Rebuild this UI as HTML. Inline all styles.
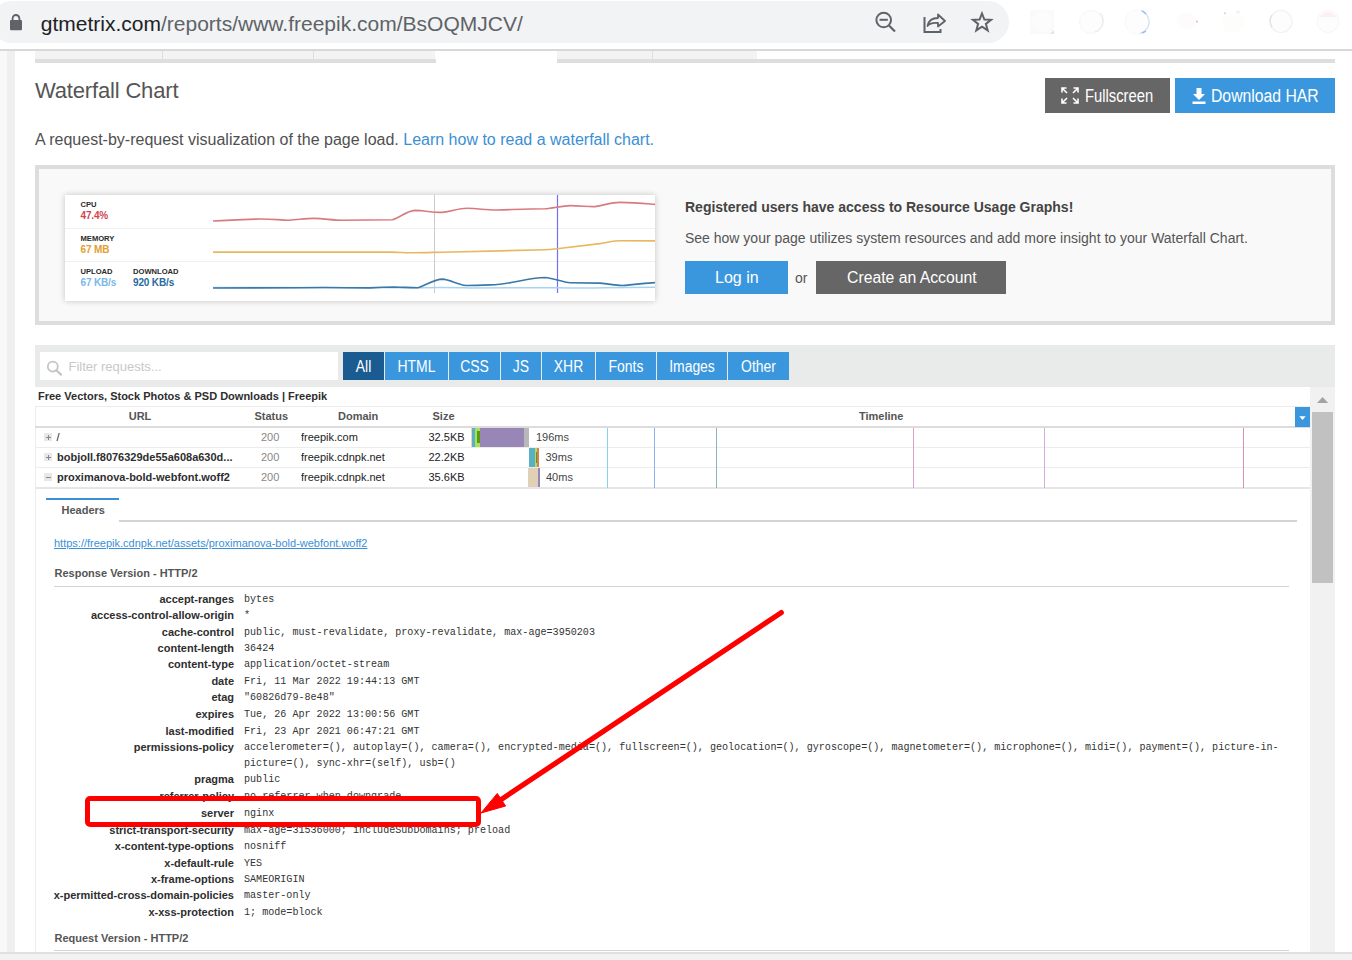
<!DOCTYPE html>
<html><head><meta charset="utf-8">
<style>
*{box-sizing:border-box;margin:0;padding:0}
html,body{width:1352px;height:960px;overflow:hidden;background:#fff;font-family:"Liberation Sans",sans-serif;position:relative}
.a{position:absolute}
.t{position:absolute;white-space:nowrap;line-height:1}
.mono{font-family:"Liberation Mono",monospace;font-size:11px;color:#333;transform:scaleX(0.9166);transform-origin:0 0}
</style></head><body>

<!-- browser toolbar -->
<div class="a" style="left:0;top:0;width:1352px;height:49px;background:#fff"></div>
<div class="a" style="left:-9px;top:1px;width:1018px;height:42px;background:#f1f3f4;border-radius:21px"></div>
<!-- lock -->
<svg class="a" style="left:0;top:0" width="30" height="40" viewBox="0 0 30 40">
  <path d="M12.6 20.5 V18.4 A3.4 3.4 0 0 1 19.4 18.4 V20.5" fill="none" stroke="#5f6368" stroke-width="1.8"/>
  <rect x="10" y="20" width="12" height="10.2" rx="1" fill="#5f6368"/>
</svg>
<div class="t" id="url" style="left:40.8px;top:12.7px;font-size:21px;color:#202124;letter-spacing:0px">gtmetrix.com<span style="color:#5f6368">/reports/www.freepik.com/BsOQMJCV/</span></div>
<!-- zoom -->
<svg class="a" style="left:872px;top:9px" width="26" height="26" viewBox="0 0 26 26">
  <circle cx="11.7" cy="11" r="7.3" fill="none" stroke="#5f6368" stroke-width="2"/>
  <line x1="7.5" y1="10.8" x2="15.8" y2="10.8" stroke="#5f6368" stroke-width="2"/>
  <line x1="17" y1="16.5" x2="23" y2="22.5" stroke="#5f6368" stroke-width="2.2"/>
</svg>
<!-- share -->
<svg class="a" style="left:920px;top:9px" width="26" height="26" viewBox="0 0 26 26">
  <path d="M4.5 8 V23 H20.5 V20" fill="none" stroke="#5f6368" stroke-width="2"/>
  <path d="M7.5 17 C8.5 11 13 9 18 9 V5.5 L25 12 L18 17.5 V14 C13 13.5 9.5 14.5 7.5 17 Z" fill="none" stroke="#5f6368" stroke-width="1.8" stroke-linejoin="round"/>
</svg>
<!-- star -->
<svg class="a" style="left:969px;top:9px" width="26" height="26" viewBox="0 0 26 26">
  <path d="M13 4.5 L15.4 10.5 L22 10.8 L16.9 14.9 L18.7 21.4 L13 17.7 L7.3 21.4 L9.1 14.9 L4 10.8 L10.6 10.5 Z" fill="none" stroke="#5f6368" stroke-width="2" stroke-linejoin="miter"/>
</svg>
<!-- extensions -->
<svg class="a" style="left:1010px;top:0;opacity:.55" width="342" height="46" viewBox="1010 0 342 46">
 <rect x="1030" y="10" width="24" height="24" fill="#f6f6f6"/>
 <circle cx="1042" cy="22" r="10" fill="#fbfbfb"/>
 <path d="M1050 34 L1054 30 L1054 34 Z" fill="#cfcfcf"/>
 <circle cx="1091" cy="22" r="11.5" fill="#fcfcfc" stroke="#f0f0f0" stroke-width="1"/>
 <path d="M1100 13 A11.5 11.5 0 0 1 1095 32" fill="none" stroke="#d0d0d0" stroke-width="1"/>
 <circle cx="1137" cy="22" r="12" fill="#fcfcfc" stroke="#eef3fb" stroke-width="1"/>
 <path d="M1141 10.5 A12 12 0 0 1 1140 33.5" fill="none" stroke="#a9c8f3" stroke-width="1.2"/>
 <path d="M1146 14 A12 12 0 0 0 1142 10.8" fill="none" stroke="#3f86e8" stroke-width="1.4"/>
 <path d="M1142 33 A12 12 0 0 0 1146 31" fill="none" stroke="#3f86e8" stroke-width="1.4"/>
 <ellipse cx="1187" cy="21" rx="10" ry="8" fill="#fdf8f8"/>
 <circle cx="1197" cy="21.5" r="1" fill="#f07070"/>
 <ellipse cx="1233" cy="23" rx="11" ry="10" fill="#fdfdfb"/>
 <circle cx="1225" cy="13.3" r="1" fill="#8cd070"/>
 <path d="M1235 12 L1240 10 L1239 14 Z" fill="#d8f0d0"/>
 <circle cx="1281" cy="21.5" r="11" fill="#fdfdfd" stroke="#e8e8ea" stroke-width="1.2"/>
 <path d="M1272 15 A11 11 0 0 0 1272 27" fill="none" stroke="#b8bcc4" stroke-width="1"/>
 <circle cx="1328" cy="21.5" r="11" fill="#fdfdfd" stroke="#f0f0f0" stroke-width="1"/>
 <path d="M1319 17 A11 11 0 0 1 1337 17 Z" fill="#fbe6e4"/>
</svg>
<div class="a" style="left:0;top:49px;width:1352px;height:2px;background:#d7d8da"></div>

<!-- page left strip -->
<div class="a" style="left:0;top:51px;width:7px;height:901px;background:#f8f8f8"></div>
<div class="a" style="left:7px;top:51px;width:8px;height:901px;background:#efefef"></div>

<!-- tab bar -->
<div class="a" style="left:35px;top:51px;width:400px;height:8px;background:#f3f3f3"></div>
<div class="a" style="left:162px;top:51px;width:1px;height:8px;background:#dedede"></div>
<div class="a" style="left:313px;top:51px;width:1px;height:8px;background:#dedede"></div>
<div class="a" style="left:557px;top:51px;width:200px;height:8px;background:#f3f3f3"></div>
<div class="a" style="left:652px;top:51px;width:1px;height:8px;background:#dedede"></div>
<div class="a" style="left:35px;top:59px;width:401px;height:4px;background:#dedede"></div>
<div class="a" style="left:557px;top:59px;width:778px;height:4px;background:#dedede"></div>

<!-- heading -->
<div class="t" style="left:35px;top:80px;font-size:22px;color:#555;letter-spacing:-0.17px">Waterfall Chart</div>
<div class="a" style="left:1045px;top:78px;width:125px;height:35px;background:#666"></div>
<svg class="a" style="left:1061px;top:87px" width="18" height="17" viewBox="0 0 18 17">
 <g fill="none" stroke="#fff" stroke-width="1.6">
  <path d="M1 5.5 V1 H5.5 M1 1 L6 6"/><path d="M17 5.5 V1 H12.5 M17 1 L12 6"/>
  <path d="M1 11.5 V16 H5.5 M1 16 L6 11"/><path d="M17 11.5 V16 H12.5 M17 16 L12 11"/>
 </g></svg>
<div class="t" style="left:1085px;top:87px;font-size:18px;color:#fff;transform:scaleX(0.82);transform-origin:0 0">Fullscreen</div>
<div class="a" style="left:1175px;top:78px;width:160px;height:35px;background:#3b97dd"></div>
<svg class="a" style="left:1192px;top:88px" width="14" height="16" viewBox="0 0 14 16">
 <path d="M4.5 0 H9.5 V6 H13 L7 12 L1 6 H4.5 Z" fill="#fff"/><rect x="0.5" y="13.5" width="13" height="2.5" fill="#fff"/></svg>
<div class="t" style="left:1211px;top:87px;font-size:18px;color:#fff;transform:scaleX(0.875);transform-origin:0 0">Download HAR</div>

<div class="t" style="left:35px;top:132px;font-size:16px;color:#505050">A request-by-request visualization of the page load. <span style="color:#3b8fd4">Learn how to read a waterfall chart.</span></div>

<!-- resource box -->
<div class="a" style="left:35px;top:165px;width:1300px;height:160px;background:#f9f9f9;border:4px solid #ddd"></div>
<div class="a" style="left:65px;top:195px;width:590px;height:106px;background:#fff;box-shadow:0 0 6px rgba(0,0,0,.22)"></div>
<div class="a" style="left:65px;top:228px;width:590px;height:1px;background:#f0f0f0"></div>
<div class="a" style="left:65px;top:261px;width:590px;height:1px;background:#f0f0f0"></div>
<div class="t" style="left:80.5px;top:201px;font-size:7.6px;font-weight:bold;color:#2a2a2a">CPU</div>
<div class="t" style="left:80.5px;top:211px;font-size:10px;letter-spacing:-0.15px;font-weight:bold;color:#d2454f">47.4%</div>
<div class="t" style="left:80.5px;top:234.5px;font-size:7.6px;font-weight:bold;color:#2a2a2a">MEMORY</div>
<div class="t" style="left:80.5px;top:244.5px;font-size:10px;letter-spacing:-0.15px;font-weight:bold;color:#e0a030">67 MB</div>
<div class="t" style="left:80.5px;top:268px;font-size:7.6px;font-weight:bold;color:#2a2a2a">UPLOAD</div>
<div class="t" style="left:80.5px;top:278px;font-size:10px;letter-spacing:-0.15px;font-weight:bold;color:#7ab8e8">67 KB/s</div>
<div class="t" style="left:133px;top:268px;font-size:7.6px;font-weight:bold;color:#2a2a2a">DOWNLOAD</div>
<div class="t" style="left:133px;top:278px;font-size:10px;letter-spacing:-0.15px;font-weight:bold;color:#2a6aa0">920 KB/s</div>
<svg class="a" style="left:0;top:0" width="700" height="310" viewBox="0 0 700 310">
 <line x1="434.5" y1="195" x2="434.5" y2="293" stroke="#ccc" stroke-width="1"/>
 <line x1="557.5" y1="195" x2="557.5" y2="293" stroke="#7070f0" stroke-width="1.2"/>
 <path d="M213 221 C230 220 245 219.5 259 219 C272 218.8 280 220.2 289 220.2 C298 219.8 305 218.4 314 218.4 C325 218.6 332 220.2 342 220.2 L392.6 219.8 C400 217.5 407 210.8 414.8 210.4 C425 210.6 433 212.6 442.4 212.4 C452 211.5 458 208.3 467 208.3 C478 208.5 487 210.2 497 210 C515 209.5 530 208.8 545 208.8 C552 208.5 563 205.6 570 205.6 C580 205.6 588 206.8 595 206.6 C605 205 611 202.4 620 202.4 C635 202.6 645 203.6 655 204.4" fill="none" stroke="#d97a7f" stroke-width="1.6"/>
 <path d="M213 252.1 L392 252.1 C402 252.4 410 252.9 415 252.8 C425 252.7 433 252.4 442 252.2 L545 249.8 C550 249.6 553 249.2 557 248.8 L600 243.6 C610 242 614 240.8 620 240.8 L655 240.9" fill="none" stroke="#e8b860" stroke-width="1.6"/>
 <path d="M213 287.6 L418 287.7 C430 287.6 450 287.3 470 287.9 C500 288 530 288 557 287.8 C575 288.2 590 288.2 605 287.8 C625 287.3 640 287.2 655 287.2" fill="none" stroke="#a8d4f4" stroke-width="1.5"/>
 <path d="M213 288 L300 287.8 C320 287.3 330 287.3 345 287.8 L370 287.9 C380 287.2 388 287 395 287 C405 287.3 410 287.8 418 287.8 C428 284 435 279.2 442.4 279.1 C450 279.5 458 285 466 285.5 C478 285.5 487 285 495 284.7 C515 283.2 530 277.5 545 277.5 C552 277.8 563 282.5 570 282.7 L600 283.1 C610 284 615 285.5 622 285.5 C635 285 645 282.8 655 282.6" fill="none" stroke="#3b78a8" stroke-width="1.6"/>
</svg>
<div class="t" style="left:685px;top:200px;font-size:14px;font-weight:bold;color:#444">Registered users have access to Resource Usage Graphs!</div>
<div class="t" style="left:685px;top:231px;font-size:14px;color:#555">See how your page utilizes system resources and add more insight to your Waterfall Chart.</div>
<div class="a" style="left:685px;top:261px;width:103px;height:33px;background:#3b97dd"></div>
<div class="t" style="left:715px;top:270px;font-size:16px;color:#fff;transform:scaleX(1);transform-origin:0 0">Log in</div>
<div class="t" style="left:795px;top:271px;font-size:14px;color:#555">or</div>
<div class="a" style="left:816px;top:261px;width:190px;height:33px;background:#666"></div>
<div class="t" style="left:847px;top:270px;font-size:16px;color:#fff;transform:scaleX(0.985);transform-origin:0 0">Create an Account</div>

<!-- filter bar -->
<div class="a" style="left:35px;top:345px;width:1300px;height:42px;background:#e9eaea"></div>
<div class="a" style="left:40px;top:352px;width:298px;height:28px;background:#fff"></div>
<svg class="a" style="left:46px;top:360px" width="18" height="16" viewBox="0 0 18 16">
 <circle cx="6.8" cy="6.6" r="5" fill="none" stroke="#c4c4c4" stroke-width="1.8"/>
 <line x1="10.3" y1="10.2" x2="15" y2="14.6" stroke="#c4c4c4" stroke-width="2.2" stroke-linecap="round"/></svg>
<div class="t" style="left:68.5px;top:360px;font-size:13px;color:#c8c8c8">Filter requests...</div>
<div class="a" style="left:343px;top:352px;width:41px;height:28px;background:#1a5c91"></div><div class="t" style="left:343px;width:41px;text-align:center;top:359px;font-size:16px;color:#fff;transform:scaleX(0.87);transform-origin:50% 0">All</div>
<div class="a" style="left:385px;top:352px;width:63px;height:28px;background:#3b97dd"></div><div class="t" style="left:385px;width:63px;text-align:center;top:359px;font-size:16px;color:#fff;transform:scaleX(0.87);transform-origin:50% 0">HTML</div>
<div class="a" style="left:449px;top:352px;width:51px;height:28px;background:#3b97dd"></div><div class="t" style="left:449px;width:51px;text-align:center;top:359px;font-size:16px;color:#fff;transform:scaleX(0.87);transform-origin:50% 0">CSS</div>
<div class="a" style="left:501px;top:352px;width:40px;height:28px;background:#3b97dd"></div><div class="t" style="left:501px;width:40px;text-align:center;top:359px;font-size:16px;color:#fff;transform:scaleX(0.87);transform-origin:50% 0">JS</div>
<div class="a" style="left:542px;top:352px;width:53px;height:28px;background:#3b97dd"></div><div class="t" style="left:542px;width:53px;text-align:center;top:359px;font-size:16px;color:#fff;transform:scaleX(0.87);transform-origin:50% 0">XHR</div>
<div class="a" style="left:596px;top:352px;width:60px;height:28px;background:#3b97dd"></div><div class="t" style="left:596px;width:60px;text-align:center;top:359px;font-size:16px;color:#fff;transform:scaleX(0.87);transform-origin:50% 0">Fonts</div>
<div class="a" style="left:657px;top:352px;width:70px;height:28px;background:#3b97dd"></div><div class="t" style="left:657px;width:70px;text-align:center;top:359px;font-size:16px;color:#fff;transform:scaleX(0.87);transform-origin:50% 0">Images</div>
<div class="a" style="left:728px;top:352px;width:61px;height:28px;background:#3b97dd"></div><div class="t" style="left:728px;width:61px;text-align:center;top:359px;font-size:16px;color:#fff;transform:scaleX(0.87);transform-origin:50% 0">Other</div>


<!-- waterfall table -->
<div class="t" style="left:38px;top:391px;font-size:11px;font-weight:bold;color:#2e2e2e">Free Vectors, Stock Photos &amp; PSD Downloads | Freepik</div>
<div class="a" style="left:35px;top:406px;width:1275px;height:1px;background:#ececec"></div>
<div class="a" style="left:35px;top:406px;width:1px;height:546px;background:#ececec"></div>
<div class="a" style="left:35px;top:426px;width:1275px;height:2px;background:#dcdcdc"></div>
<div class="a" style="left:35px;top:447px;width:1275px;height:1px;background:#ececec"></div>
<div class="a" style="left:35px;top:467px;width:1275px;height:1px;background:#ececec"></div>
<div class="a" style="left:35px;top:487px;width:1275px;height:2px;background:#e6e6e6"></div>
<div class="t" style="left:100px;width:80px;text-align:center;top:411px;font-size:11px;font-weight:bold;color:#555">URL</div>
<div class="t" style="left:254.5px;top:411px;font-size:11px;font-weight:bold;color:#555">Status</div>
<div class="t" style="left:338px;top:411px;font-size:11px;font-weight:bold;color:#555">Domain</div>
<div class="t" style="left:432.5px;top:411px;font-size:11px;font-weight:bold;color:#555">Size</div>
<div class="t" style="left:859px;top:411px;font-size:11px;font-weight:bold;color:#555">Timeline</div>
<div class="a" style="left:1295px;top:407px;width:15px;height:20px;background:#3b97dd"></div>
<svg class="a" style="left:1295px;top:407px" width="15" height="20" viewBox="0 0 15 20"><path d="M4.3 9.3 H10.7 L7.5 13 Z" fill="#fff"/></svg>
<!-- timeline lines -->
<div class="a" style="left:607px;top:428px;width:1px;height:60px;background:#86d2f2"></div>
<div class="a" style="left:654px;top:428px;width:1px;height:60px;background:#8fb0ee"></div>
<div class="a" style="left:716px;top:428px;width:1px;height:60px;background:#8fb3b3"></div>
<div class="a" style="left:913px;top:428px;width:1px;height:60px;background:#d9a0cf"></div>
<div class="a" style="left:1044px;top:428px;width:1px;height:60px;background:#d8aee2"></div>
<div class="a" style="left:1243px;top:428px;width:1px;height:60px;background:#d890b8"></div>
<!-- rows -->
<div class="a" style="left:44px;top:433px;width:8px;height:8px;background:#e8e8e8"></div>
<div class="a" style="left:45.5px;top:436.5px;width:5px;height:1px;background:#888"></div><div class="a" style="left:47.5px;top:434.5px;width:1px;height:5px;background:#888"></div>
<div class="t" style="left:56.5px;top:432px;font-size:11px;color:#222">/</div>
<div class="a" style="left:44px;top:453px;width:8px;height:8px;background:#e8e8e8"></div>
<div class="a" style="left:45.5px;top:456.5px;width:5px;height:1px;background:#888"></div><div class="a" style="left:47.5px;top:454.5px;width:1px;height:5px;background:#888"></div>
<div class="t" style="left:57px;top:452px;font-size:11px;font-weight:bold;color:#2e2e2e">bobjoll.f8076329de55a608a630d...</div>
<div class="a" style="left:44px;top:473px;width:8px;height:8px;background:#e8e8e8"></div>
<div class="a" style="left:45.5px;top:476.5px;width:5px;height:1px;background:#888"></div>
<div class="t" style="left:57px;top:472px;font-size:11px;font-weight:bold;color:#2e2e2e">proximanova-bold-webfont.woff2</div>
<div class="t" style="left:261px;top:432px;font-size:11px;color:#888">200</div>
<div class="t" style="left:261px;top:452px;font-size:11px;color:#888">200</div>
<div class="t" style="left:261px;top:472px;font-size:11px;color:#888">200</div>
<div class="t" style="left:301px;top:432px;font-size:11px;color:#222">freepik.com</div>
<div class="t" style="left:301px;top:452px;font-size:11px;color:#222">freepik.cdnpk.net</div>
<div class="t" style="left:301px;top:472px;font-size:11px;color:#222">freepik.cdnpk.net</div>
<div class="t" style="left:428.5px;top:432px;font-size:11px;color:#222">32.5KB</div>
<div class="t" style="left:428.5px;top:452px;font-size:11px;color:#222">22.2KB</div>
<div class="t" style="left:428.5px;top:472px;font-size:11px;color:#222">35.6KB</div>
<!-- bars -->
<div class="a" style="left:471px;top:428px;width:1px;height:19px;background:#e8d4b8"></div>
<div class="a" style="left:472px;top:428px;width:3px;height:19px;background:#58afc6"></div>
<div class="a" style="left:475px;top:428px;width:5px;height:19px;background:#a8e05c"></div>
<div class="a" style="left:477px;top:431px;width:3px;height:12px;background:#5e9a10"></div>
<div class="a" style="left:480px;top:428px;width:44px;height:19px;background:#9886b6"></div>
<div class="a" style="left:524px;top:428px;width:5px;height:19px;background:#b8b8b8"></div>
<div class="t" style="left:536px;top:432px;font-size:11px;color:#444">196ms</div>
<div class="a" style="left:529px;top:448px;width:6px;height:19px;background:#58afc6"></div>
<div class="a" style="left:535px;top:448px;width:2px;height:19px;background:#a8e05c"></div>
<div class="a" style="left:535.5px;top:452px;width:1.5px;height:11px;background:#5e9a10"></div>
<div class="a" style="left:537px;top:448px;width:2px;height:19px;background:#e07a5c"></div>
<div class="t" style="left:545.5px;top:452px;font-size:11px;color:#444">39ms</div>
<div class="a" style="left:528px;top:468px;width:10px;height:19px;background:#e0d0b6"></div>
<div class="a" style="left:538px;top:468px;width:1.5px;height:19px;background:#9886b6"></div>
<div class="t" style="left:546px;top:472px;font-size:11px;color:#444">40ms</div>


<!-- details -->
<div class="a" style="left:46px;top:498px;width:73px;height:2px;background:#3b8fd8"></div>
<div class="t" style="left:61.5px;top:505px;font-size:11px;font-weight:bold;color:#555">Headers</div>
<div class="a" style="left:119px;top:520px;width:1178px;height:2px;background:#d4d4d4"></div>
<div class="t" style="left:54px;top:538px;font-size:11px;color:#3b8fd8;text-decoration:underline">https://freepik.cdnpk.net/assets/proximanova-bold-webfont.woff2</div>
<div class="t" style="left:54.5px;top:568px;font-size:11px;font-weight:bold;color:#555">Response Version - HTTP/2</div>
<div class="a" style="left:54px;top:586px;width:1235px;height:1px;background:#d4d4d4"></div>
<!-- rows -->
<div class="t" style="right:1118px;top:594px;font-size:11px;font-weight:bold;color:#2e2e2e">accept-ranges</div><div class="t mono" style="left:244px;top:594px">bytes</div>
<div class="t" style="right:1118px;top:610px;font-size:11px;font-weight:bold;color:#2e2e2e">access-control-allow-origin</div><div class="t mono" style="left:244px;top:610px">*</div>
<div class="t" style="right:1118px;top:627px;font-size:11px;font-weight:bold;color:#2e2e2e">cache-control</div><div class="t mono" style="left:244px;top:627px">public, must-revalidate, proxy-revalidate, max-age=3950203</div>
<div class="t" style="right:1118px;top:643px;font-size:11px;font-weight:bold;color:#2e2e2e">content-length</div><div class="t mono" style="left:244px;top:643px">36424</div>
<div class="t" style="right:1118px;top:659px;font-size:11px;font-weight:bold;color:#2e2e2e">content-type</div><div class="t mono" style="left:244px;top:659px">application/octet-stream</div>
<div class="t" style="right:1118px;top:676px;font-size:11px;font-weight:bold;color:#2e2e2e">date</div><div class="t mono" style="left:244px;top:676px">Fri, 11 Mar 2022 19:44:13 GMT</div>
<div class="t" style="right:1118px;top:692px;font-size:11px;font-weight:bold;color:#2e2e2e">etag</div><div class="t mono" style="left:244px;top:692px">"60826d79-8e48"</div>
<div class="t" style="right:1118px;top:709px;font-size:11px;font-weight:bold;color:#2e2e2e">expires</div><div class="t mono" style="left:244px;top:709px">Tue, 26 Apr 2022 13:00:56 GMT</div>
<div class="t" style="right:1118px;top:726px;font-size:11px;font-weight:bold;color:#2e2e2e">last-modified</div><div class="t mono" style="left:244px;top:726px">Fri, 23 Apr 2021 06:47:21 GMT</div>
<div class="t" style="right:1118px;top:742px;font-size:11px;font-weight:bold;color:#2e2e2e">permissions-policy</div><div class="t mono" style="left:244px;top:742px">accelerometer=(), autoplay=(), camera=(), encrypted-media=(), fullscreen=(), geolocation=(), gyroscope=(), magnetometer=(), microphone=(), midi=(), payment=(), picture-in-</div>
<div class="t mono" style="left:244px;top:758px">picture=(), sync-xhr=(self), usb=()</div>
<div class="t" style="right:1118px;top:774px;font-size:11px;font-weight:bold;color:#2e2e2e">pragma</div><div class="t mono" style="left:244px;top:774px">public</div>
<div class="t" style="right:1118px;top:791px;font-size:11px;font-weight:bold;color:#2e2e2e">referrer-policy</div><div class="t mono" style="left:244px;top:791px">no-referrer-when-downgrade</div>
<div class="t" style="right:1118px;top:808px;font-size:11px;font-weight:bold;color:#2e2e2e">server</div><div class="t mono" style="left:244px;top:808px">nginx</div>
<div class="t" style="right:1118px;top:825px;font-size:11px;font-weight:bold;color:#2e2e2e">strict-transport-security</div><div class="t mono" style="left:244px;top:825px">max-age=31536000; includeSubDomains; preload</div>
<div class="t" style="right:1118px;top:841px;font-size:11px;font-weight:bold;color:#2e2e2e">x-content-type-options</div><div class="t mono" style="left:244px;top:841px">nosniff</div>
<div class="t" style="right:1118px;top:858px;font-size:11px;font-weight:bold;color:#2e2e2e">x-default-rule</div><div class="t mono" style="left:244px;top:858px">YES</div>
<div class="t" style="right:1118px;top:874px;font-size:11px;font-weight:bold;color:#2e2e2e">x-frame-options</div><div class="t mono" style="left:244px;top:874px">SAMEORIGIN</div>
<div class="t" style="right:1118px;top:890px;font-size:11px;font-weight:bold;color:#2e2e2e">x-permitted-cross-domain-policies</div><div class="t mono" style="left:244px;top:890px">master-only</div>
<div class="t" style="right:1118px;top:907px;font-size:11px;font-weight:bold;color:#2e2e2e">x-xss-protection</div><div class="t mono" style="left:244px;top:907px">1; mode=block</div>
<!-- /rows -->
<div class="t" style="left:54.5px;top:933px;font-size:11px;font-weight:bold;color:#555">Request Version - HTTP/2</div>
<div class="a" style="left:54px;top:950px;width:1235px;height:1px;background:#d4d4d4"></div>


<!-- annotation -->
<svg class="a" style="left:0;top:0;z-index:10" width="1352" height="960" viewBox="0 0 1352 960">
 <rect x="87.5" y="798.5" width="391" height="26" rx="2.5" fill="none" stroke="#ff0000" stroke-width="5"/>
 <line x1="781.3" y1="612.6" x2="500" y2="800.3" stroke="#ff0000" stroke-width="5.2" stroke-linecap="round"/>
 <path d="M481 813 L497.3 793.4 L505.6 806 Z" fill="#ff0000" stroke="#ff0000" stroke-width="1" stroke-linejoin="round"/>
</svg>

<!-- scrollbar -->
<div class="a" style="left:1310px;top:387px;width:25px;height:565px;background:#f1f1f1"></div>
<div class="a" style="left:1312px;top:412px;width:21px;height:171px;background:#c1c1c1"></div>
<svg class="a" style="left:1310px;top:390px" width="25" height="20" viewBox="0 0 25 20"><path d="M7 13 L18.2 13 L12.6 7 Z" fill="#a3a3a3"/></svg>

<!-- bottom -->
<div class="a" style="left:0;top:952px;width:1352px;height:8px;background:#f2f2f2;border-top:2px solid #e0e0e0"></div>
</body></html>
